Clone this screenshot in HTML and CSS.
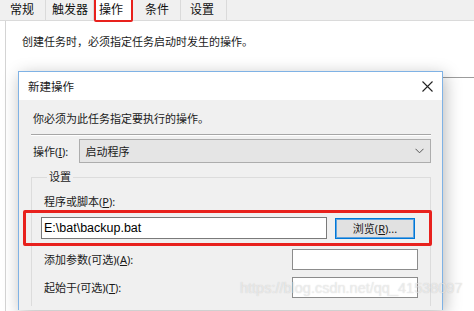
FILE: index.html
```html
<!DOCTYPE html>
<html lang="zh-CN">
<head>
    <meta charset="UTF-8">
    <title>新建操作</title>
    <link rel="stylesheet" href="styles.css">
</head>
<body>

    <!-- ventana de fondo: propiedades de la tarea -->
    <div class="tabs">
        <div class="tab tab-1">常规</div>
        <div class="tab tab-2">触发器</div>
        <div class="tab tab-3 active">操作</div>
        <div class="tab tab-4">条件</div>
        <div class="tab tab-5">设置</div>
        <div class="tab-rest"></div>
    </div>
    <div class="panel">
        <p class="panel-text">创建任务时，必须指定任务启动时发生的操作。</p>
        <div class="list-top"></div>
    </div>

    <!-- dialogo -->
    <div class="dialog">
        <div class="title-bar">
            <span>新建操作</span>
            <svg class="close" width="11" height="11" viewBox="0 0 11 11">
                <path d="M0.5 0.5 L10.5 10.5 M10.5 0.5 L0.5 10.5" stroke="#222" stroke-width="1.1" fill="none"/>
            </svg>
        </div>
        <div class="dialog-body">
            <p class="intro">你必须为此任务指定要执行的操作。</p>
            <div class="sep"></div>
            <div class="action-row">
                <label class="action-label">操作(<u>I</u>):</label>
                <div class="select">
                    <span>启动程序</span>
                    <svg width="9" height="6" viewBox="0 0 9 6">
                        <path d="M0.5 0.8 L4.5 4.8 L8.5 0.8" stroke="#555" stroke-width="1" fill="none"/>
                    </svg>
                </div>
            </div>
            <fieldset class="group">
                <legend>设置</legend>
                <div class="field-label">程序或脚本(<u>P</u>):</div>
                <div class="program-row">
                    <div class="input input-program">E:\bat\backup.bat</div>
                    <button class="btn" type="button">浏览(<u>R</u>)...</button>
                </div>
                <div class="opt-row opt-first">
                    <span class="field-label">添加参数(可选)(<u>A</u>):</span>
                    <div class="input input-small"></div>
                </div>
                <div class="opt-row opt-second">
                    <span class="field-label">起始于(可选)(<u>T</u>):</span>
                    <div class="input input-small"></div>
                </div>
            </fieldset>
        </div>
    </div>

    <!-- marcas rojas -->
    <div class="mark mark-tab"></div>
    <div class="mark mark-program"></div>

    <div class="watermark">https://blog.csdn.net/qq_41538097</div>
</body>
</html>
```

FILE: styles.css
```css
/* Estilos generales */
body {
    margin: 0;
    width: 474px;
    height: 311px;
    overflow: hidden;
    background: #fff;
    font-family: "Noto Sans", "Noto Sans CJK SC", sans-serif;
    font-size: 11px;
    color: #1a1a1a;
    position: relative;
}

/* Pestañas */
.tabs {
    display: flex;
    height: 20px;
    background: #f0f0f0;
    border-bottom: 1px solid #dadada;
}

.tab {
    width: 46px;
    line-height: 20px;
    font-size: 12px;
    padding-left: 10px;
    box-sizing: border-box;
    border-right: 1px solid #dadada;
    color: #111;
}

.tab-2 { width: 48px; padding-left: 6px; }
.tab-3 { width: 39px; padding-left: 5px; background: #fff; }
.tab-4 { width: 48px; padding-left: 12px; }
.tab-5 { width: 46px; padding-left: 9px; }

.tab-rest {
    flex: 1;
}

.panel {
    margin-left: 5px;
    border-left: 1px solid #d4d4d4;
    height: 290px;
}

.panel-text {
    margin: 0;
    padding: 14px 0 0 16px;
    line-height: 14px;
}

.list-top {
    margin-top: 28px;
    margin-left: 20px;
    border-top: 1px solid #9c9c9c;
}

/* Dialogo */
.dialog {
    position: absolute;
    left: 18px;
    top: 71px;
    width: 423px;
    height: 238px;
    border: 1px solid #7fb2e5;
    border-bottom: none;
    background: #f0f0f0;
    box-shadow: 2px 4px 16px rgba(0, 0, 0, 0.28);
}

.title-bar {
    height: 28px;
    background: #fff;
    display: flex;
    align-items: center;
    justify-content: space-between;
    padding: 0 9px 0 9px;
    font-size: 11.5px;
}

.dialog-body {
    padding: 0 11px 0 12px;
}

.intro {
    margin: 11px 0 0 2px;
    line-height: 16px;
}

.sep {
    margin-top: 7px;
    border-top: 1px solid #a6a6a6;
    border-bottom: 1px solid #fff;
}

.action-row {
    display: flex;
    align-items: center;
    margin-top: 3px;
}

.action-label {
    width: 47px;
    padding-left: 2px;
}

.select {
    width: 343px;
    height: 22px;
    background: #e5e5e5;
    border: 1px solid #adadad;
    display: flex;
    align-items: center;
    justify-content: space-between;
    padding: 0 6px 0 5px;
}

/* Grupo de configuracion */
.group {
    margin: 7px 0 0 0;
    padding: 0 12px 8px 9px;
    border: 1px solid #dcdcdc;
    border-bottom: none;
    min-width: 0;
}

.group legend {
    margin-left: 6px;
    padding: 0 2px;
    line-height: 14px;
}

.field-label {
    padding-left: 3px;
    line-height: 14px;
}

.group > .field-label {
    margin-top: 11px;
}

.program-row {
    display: flex;
    align-items: center;
    margin-top: 8px;
}

.input {
    background: #fff;
    border: 1px solid #7a7a7a;
    box-sizing: border-box;
    flex-shrink: 0;
}

.input-program {
    width: 286px;
    height: 22px;
    line-height: 20px;
    padding-left: 2px;
    font-family: "Liberation Sans", sans-serif;
    font-size: 12.5px;
    color: #000;
}

.btn {
    flex-shrink: 0;
    margin-left: 8px;
    width: 80px;
    height: 21px;
    padding: 0;
    background: #e1e1e1;
    border: 1px solid #0078d7;
    box-shadow: inset 0 0 0 1px #5ea3e0;
    font-family: inherit;
    font-size: 11px;
    color: #1a1a1a;
}

.opt-row {
    display: flex;
    align-items: center;
    justify-content: space-between;
}

.opt-first {
    margin-top: 10px;
}

.opt-second {
    margin-top: 7px;
}

.input-small {
    width: 126px;
    height: 21px;
    border-color: #8c8c8c;
}

/* Marcas rojas */
.mark {
    position: absolute;
    border: 2px solid #e8211d;
    border-radius: 2px;
}

.mark-tab {
    left: 94px;
    top: -2px;
    width: 35px;
    height: 20px;
}

.mark-program {
    left: 23px;
    top: 210px;
    width: 403px;
    height: 30px;
    border-width: 3px;
}

.watermark {
    position: absolute;
    left: 240px;
    top: 280px;
    font-family: "Liberation Sans", sans-serif;
    font-size: 14.5px;
    color: rgba(255, 255, 255, 0.55);
    text-shadow: 0 0 1px rgba(90, 90, 90, 0.3);
    white-space: nowrap;
}
```
